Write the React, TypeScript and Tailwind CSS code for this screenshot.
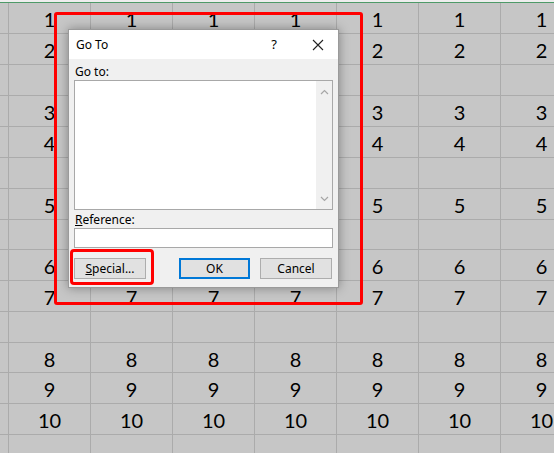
import React from "react";

const rows: string[] = ["1", "2", "", "3", "4", "", "5", "", "6", "7", "", "8", "9", "10", ""];
const heights: number[] = [31, 31, 31, 31, 31, 31, 31, 30, 31, 31, 31, 30, 31, 31, 31];

function Row({ v, h, idx }: { v: string; h: number; idx: number }) {
  const hc = h === 30 ? "h-[30px]" : "h-[31px]";
  const covered = idx >= 1 && idx <= 8;
  return (
    <div className={`flex shrink-0 ${hc}`}>
      <div className="w-[9px] shrink-0 border-r border-b border-[#ababab]" />
      {Array.from({ length: 7 }).map((_, i) => (
        <div
          key={i}
          className="w-[82px] shrink-0 border-r border-b border-[#ababab] flex items-center justify-center text-[20px] text-black font-['Lato',sans-serif] leading-none pt-[2px]"
        >
          {covered && i >= 1 && i <= 3 ? "" : v}
        </div>
      ))}
    </div>
  );
}

export default function App() {
  return (
    <div className="relative w-[554px] h-[453px] overflow-hidden bg-[#c6c6c6]">
      <div className="flex flex-col">
        <div className="h-[2px] bg-[#eeeeee]" />
        <div className="h-[1px] bg-[#4e9a68]" />
        {rows.map((v, i) => (
          <Row key={i} v={v} h={heights[i]} idx={i} />
        ))}
      </div>

      {/* Dialog */}
      <div className="absolute left-[68px] top-[29px] w-[271px] h-[259px] border border-[#9a9a9a] bg-[#f0f0f0] shadow-[0_0_10px_rgba(0,0,0,0.35)] flex flex-col font-['Noto_Sans',sans-serif] text-[12px] text-black">
        <div className="h-[29px] bg-white flex items-center pl-[7px] shrink-0">
          <span>Go To</span>
          <span className="flex-1" />
          <span className="mr-[21px] text-[13px]">?</span>
          <div className="w-[40px] flex justify-center items-center">
            <svg width="12" height="12" viewBox="0 0 12 12">
              <path d="M1 1 L11 11 M11 1 L1 11" stroke="#222" strokeWidth="1.1" fill="none" />
            </svg>
          </div>
        </div>
        <div className="flex flex-col px-[5px] pt-[5px]">
          <div className="h-[16px] leading-[16px] pl-[1px]">Go to:</div>
          <div className="h-[130px] bg-white border border-[#a8a8a8] flex justify-end">
            <div className="w-[16px] h-full bg-[#f0f0f0] flex flex-col items-center justify-between pt-[8px] pb-[7px]">
              <svg width="9" height="6" viewBox="0 0 9 6">
                <path d="M1 5 L4.5 1.5 L8 5" stroke="#a6a6a6" strokeWidth="1.2" fill="none" />
              </svg>
              <svg width="9" height="6" viewBox="0 0 9 6">
                <path d="M1 1 L4.5 4.5 L8 1" stroke="#a6a6a6" strokeWidth="1.2" fill="none" />
              </svg>
            </div>
          </div>
          <div className="h-[16px] leading-[16px] mt-[2px] pl-[1px]">
            <span className="underline">R</span>eference:
          </div>
          <div className="h-[20px] bg-white border border-[#a8a8a8]" />
          <div className="flex mt-[10px] mr-[1px]">
            <div className="w-[72px] h-[21px] bg-[#e1e1e1] border border-[#adadad] flex items-center justify-center">
              <span>
                <span className="underline">S</span>pecial...
              </span>
            </div>
            <span className="flex-1" />
            <div className="w-[71px] h-[21px] bg-[#e1e1e1] border-2 border-[#0078d7] flex items-center justify-center">
              OK
            </div>
            <div className="w-[72px] h-[21px] ml-[10px] bg-[#e1e1e1] border border-[#adadad] flex items-center justify-center">
              Cancel
            </div>
          </div>
        </div>
      </div>

      {/* Annotations */}
      <div className="absolute left-[54px] top-[12px] w-[309px] h-[293px] border-[3px] border-[#ff0000] rounded-[3px]" />
      <div className="absolute left-[70px] top-[249px] w-[84px] h-[36px] border-[3px] border-[#ff0000] rounded-[4px]" />
    </div>
  );
}
